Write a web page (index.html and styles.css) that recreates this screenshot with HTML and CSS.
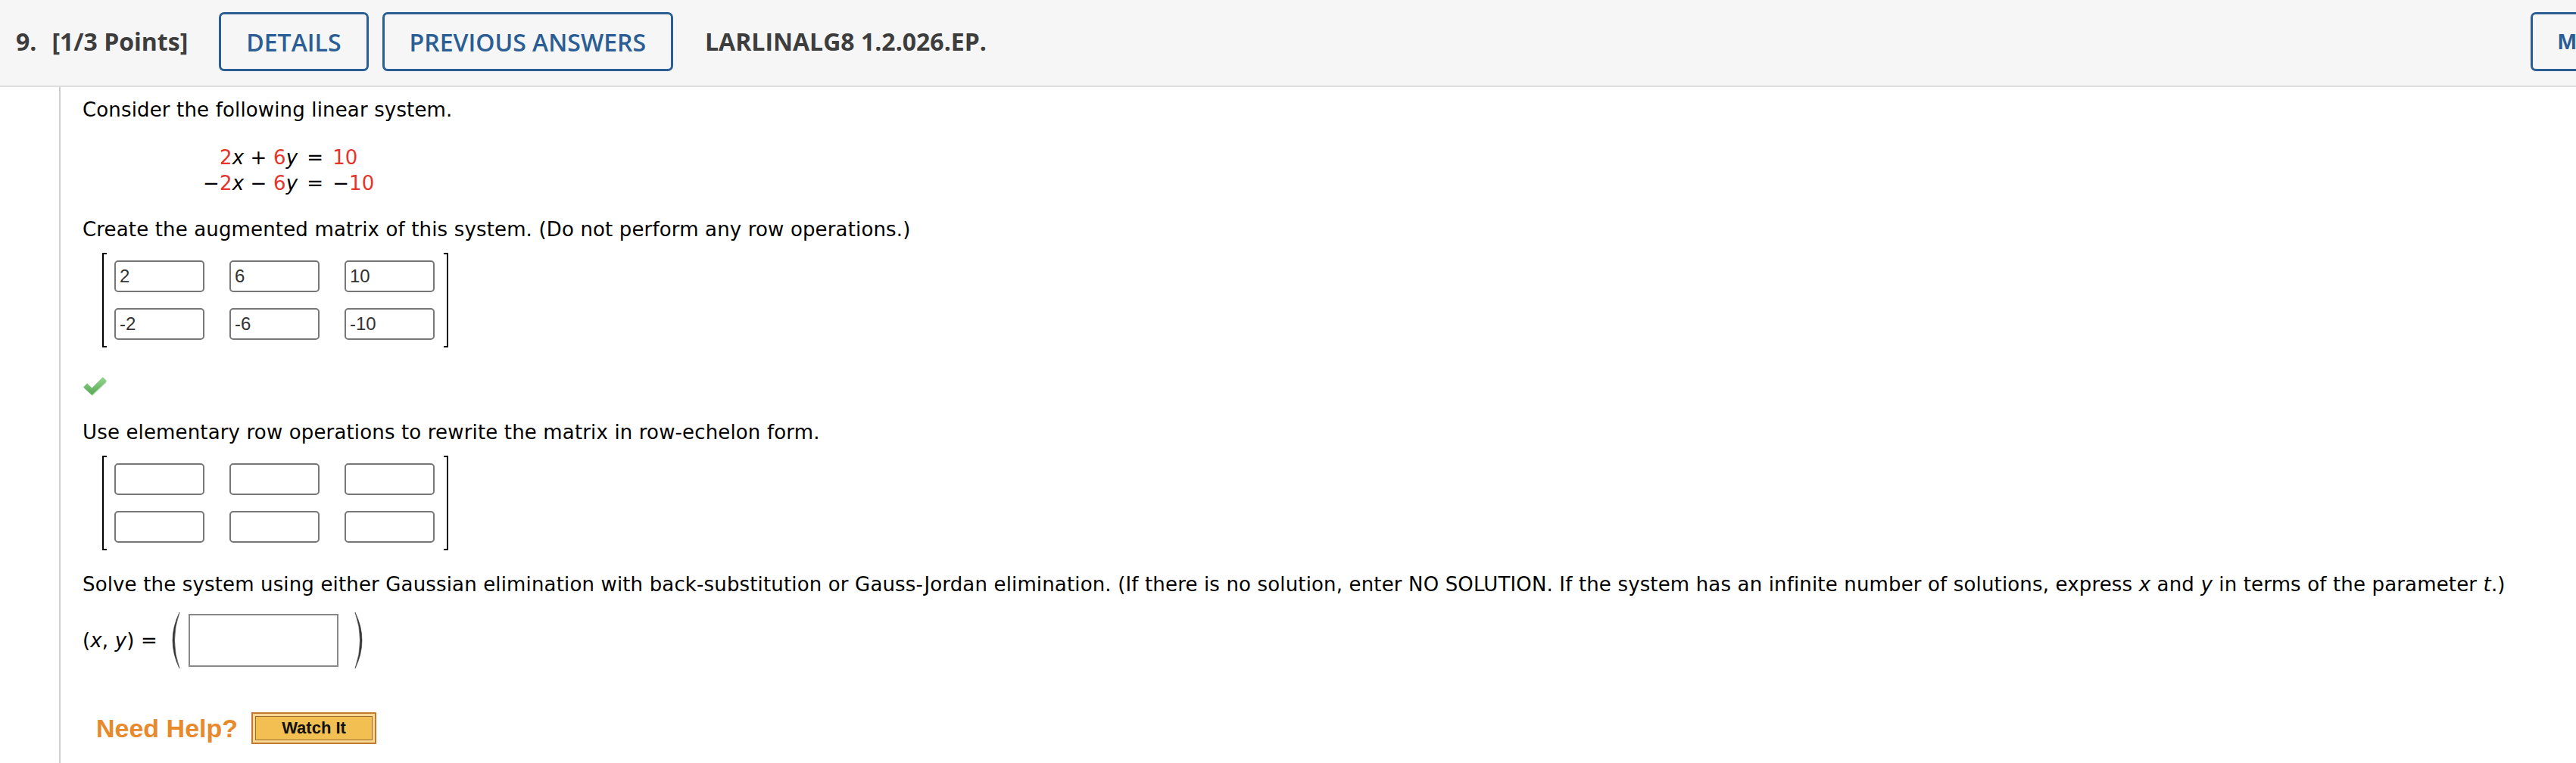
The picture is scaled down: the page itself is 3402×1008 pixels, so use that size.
FILE: index.html
```html
<!doctype html>
<html lang="en">
    <head>
        <meta charset="UTF-8" />
        <meta name="viewport" content="width=device-width, initial-scale=1.0" />
        <title>Question 9</title>
        <link rel="stylesheet" href="styles.css">
    </head>
    <body>
        <div class="q-header">
            <span class="q-number">9.</span>
            <span class="q-points">[1/3 Points]</span>
            <button class="q-btn">DETAILS</button>
            <button class="q-btn">PREVIOUS ANSWERS</button>
            <span class="q-id">LARLINALG8 1.2.026.EP.</span>
            <div class="q-tools">
                <button class="q-btn q-btn-notes">MY NOTES</button>
            </div>
        </div>

        <div class="q-body">
            <p>Consider the following linear system.</p>

            <div class="system">
                <span class="sign"></span>
                <span><span class="num">2</span><i>x</i> + <span class="num">6</span><i>y</i></span>
                <span class="eq">=</span>
                <span class="num">10</span>

                <span class="sign">&minus;</span>
                <span><span class="num">2</span><i>x</i> &minus; <span class="num">6</span><i>y</i></span>
                <span class="eq">=</span>
                <span>&minus;<span class="num">10</span></span>
            </div>

            <p class="step">Create the augmented matrix of this system. (Do not perform any row operations.)</p>

            <div class="matrix">
                <span class="bracket bracket-left"></span>
                <div class="matrix-grid">
                    <input class="cell" type="text" value="2" readonly />
                    <input class="cell" type="text" value="6" readonly />
                    <input class="cell" type="text" value="10" readonly />
                    <input class="cell" type="text" value="-2" readonly />
                    <input class="cell" type="text" value="-6" readonly />
                    <input class="cell" type="text" value="-10" readonly />
                </div>
                <span class="bracket bracket-right"></span>
            </div>

            <svg class="check" width="31" height="25" viewBox="0 0 30 24">
                <defs>
                    <linearGradient id="checkFill" x1="0" y1="0" x2="0" y2="1">
                        <stop offset="0" stop-color="#96d691" />
                        <stop offset="1" stop-color="#55a852" />
                    </linearGradient>
                </defs>
                <polygon points="1,14 5,10 11,16 25,2 29,6 11,23" fill="#3d7f3b" opacity="0.35" transform="translate(0.5 1)" />
                <polygon points="0,13 5,8 11,14 25,0 30,5 11,23" fill="url(#checkFill)" />
            </svg>

            <p class="step step-after-check">Use elementary row operations to rewrite the matrix in row-echelon form.</p>

            <div class="matrix">
                <span class="bracket bracket-left"></span>
                <div class="matrix-grid">
                    <input class="cell" type="text" />
                    <input class="cell" type="text" />
                    <input class="cell" type="text" />
                    <input class="cell" type="text" />
                    <input class="cell" type="text" />
                    <input class="cell" type="text" />
                </div>
                <span class="bracket bracket-right"></span>
            </div>

            <p class="step step-solve">Solve the system using either Gaussian elimination with back-substitution or Gauss-Jordan elimination. (If there is no solution, enter NO SOLUTION. If the system has an infinite number of solutions, express <i>x</i> and <i>y</i> in terms of the parameter <i>t</i>.)</p>

            <div class="answer">
                <span class="answer-label">(<i>x</i>, <i>y</i>) =</span>
                <svg class="paren" width="16" height="76" viewBox="0 0 16 76">
                    <path d="M15 1 Q-3 38 15 75 Q2 38 15 1 Z" fill="#333" stroke="#333" stroke-width="0.6" />
                </svg>
                <input class="answer-box" type="text" />
                <svg class="paren" width="16" height="76" viewBox="0 0 16 76">
                    <path d="M1 1 Q19 38 1 75 Q14 38 1 1 Z" fill="#333" stroke="#333" stroke-width="0.6" />
                </svg>
            </div>

            <div class="help">
                <span class="help-label">Need Help?</span>
                <button class="watch-btn"><span>Watch It</span></button>
            </div>
        </div>
    </body>
</html>
```

FILE: styles.css
```css
body {
    margin: 0;
    background-color: #fff;
    color: #000;
    font-family: "DejaVu Sans", Verdana, sans-serif;
    font-size: 26px;
    line-height: 30px;
    letter-spacing: 0.15px;
}

p {
    margin: 0;
}

/* header bar */

.q-header {
    display: flex;
    align-items: center;
    height: 78px;
    padding: 16px 0 19px 21px;
    background-color: #f6f6f6;
    border-bottom: 2px solid #dedede;
    overflow: hidden;
    white-space: nowrap;
    font-family: "Open Sans", sans-serif;
    font-size: 32px;
    letter-spacing: 0;
    color: #3d3d3d;
}

.q-number {
    font-weight: 700;
    margin-right: 20px;
}

.q-points {
    font-weight: 700;
    margin-right: 41px;
}

.q-btn {
    flex: none;
    height: 78px;
    padding: 0 33px;
    margin-right: 18px;
    border: 3px solid #2b5f93;
    border-radius: 7px;
    background-color: transparent;
    color: #2a5e94;
    font-family: "Open Sans", sans-serif;
    font-size: 32px;
    font-weight: 600;
}

.q-id {
    font-weight: 700;
    margin-left: 24px;
}

.q-tools {
    display: flex;
    margin-left: auto;
    margin-right: -168px;
}

.q-btn-notes {
    font-family: "Liberation Sans", Arial, sans-serif;
    font-size: 30px;
    font-weight: 700;
    margin-right: 0;
}

/* question body */

.q-body {
    margin-left: 78px;
    border-left: 2px solid #cfcfcf;
    padding: 15px 0 0 29px;
    min-height: 878px;
}

.num {
    color: #e5352b;
}

.system {
    display: grid;
    grid-template-columns: repeat(4, auto);
    grid-auto-rows: 34px;
    align-items: center;
    justify-content: start;
    margin: 31px 0 0 159px;
}

.system .sign {
    text-align: right;
}

.system .eq {
    padding: 0 12px;
}

.step {
    margin-top: 29px;
}

.step-after-check {
    margin-top: 33px;
}

.step-solve {
    margin-top: 30px;
}

/* matrix of inputs */

.matrix {
    display: flex;
    margin: 16px 0 0 26px;
}

.bracket {
    width: 4px;
    border: 2px solid #000;
}

.bracket-left {
    border-right: 0;
}

.bracket-right {
    border-left: 0;
}

.matrix-grid {
    display: grid;
    grid-template-columns: repeat(3, 119px);
    column-gap: 33px;
    row-gap: 21px;
    padding: 10px 12px 10px 10px;
}

.cell {
    box-sizing: border-box;
    width: 119px;
    height: 42px;
    margin: 0;
    padding: 0 5px;
    border: 2px solid #777;
    border-radius: 5px;
    background-color: #fff;
    color: #333;
    font-family: "Liberation Sans", Arial, sans-serif;
    font-size: 24px;
}

.check {
    display: block;
    margin: 39px 0 0 1px;
}

/* final answer */

.answer {
    display: flex;
    align-items: center;
    margin-top: 21px;
    height: 76px;
}

.paren {
    flex: none;
}

.answer-label {
    margin-right: 14px;
}

.answer-box {
    box-sizing: border-box;
    width: 198px;
    height: 70px;
    margin: 0 21px 0 11px;
    border: 2px solid #888;
    border-radius: 0;
    background-color: #fff;
}

.help {
    display: flex;
    align-items: center;
    margin-top: 57px;
    padding-left: 18px;
}

.help-label {
    margin-right: 18px;
    color: #e8892b;
    font-family: "Liberation Sans", Arial, sans-serif;
    font-size: 34px;
    font-weight: 700;
    letter-spacing: 0;
}

.watch-btn {
    box-sizing: border-box;
    width: 165px;
    height: 42px;
    padding: 3px;
    border: 2px solid #c17a32;
    background-color: #f7d792;
}

.watch-btn span {
    display: block;
    height: 100%;
    box-sizing: border-box;
    border: 1px solid #9c6d2e;
    background-color: #f1bf52;
    color: #111;
    font-family: "Liberation Sans", Arial, sans-serif;
    font-size: 22px;
    font-weight: 700;
    line-height: 30px;
    letter-spacing: 0;
}
```
